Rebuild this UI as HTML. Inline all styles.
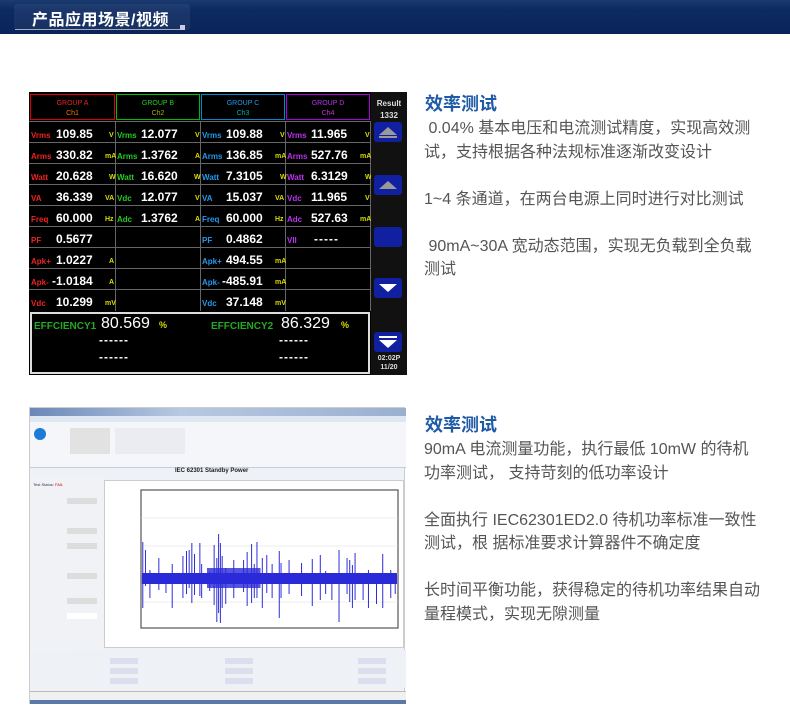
<!DOCTYPE html>
<html><head><meta charset="utf-8"><style>
*{margin:0;padding:0;box-sizing:border-box}
body{width:790px;height:728px;background:#fff;position:relative;overflow:hidden;font-family:"Liberation Sans","Noto Sans CJK SC",sans-serif}
.hdr{position:absolute;left:0;top:0;width:790px;height:34px;background:linear-gradient(180deg,#1a3a70 0%,#0c2a62 30%,#0a2458 100%)}
.hdr .t{position:absolute;left:32px;top:6px;color:#fff;font-size:16px;font-weight:bold;letter-spacing:0.5px}
.hdr .pl{position:absolute;left:14px;top:4px;width:176px;height:26px;background:rgba(255,255,255,0.06);border-radius:3px}
.hdr .ln{position:absolute;left:15px;top:29px;width:167px;height:1px;background:#aab}
.hdr .sq{position:absolute;left:180px;top:25px;width:5px;height:5px;background:#ccd}
.scr{position:absolute;left:29px;top:92px;width:378px;height:283px;background:#000}
.c{position:absolute;font-family:"Liberation Sans",sans-serif;font-weight:bold;white-space:nowrap}
.gh{position:absolute;border:1px solid;font-size:7px;text-align:center;line-height:10px;padding-top:4px}
.lab{position:absolute;font-size:8px;font-weight:bold;white-space:nowrap}
.val{position:absolute;font-size:12px;color:#fff;font-weight:bold;white-space:nowrap}
.u{position:absolute;font-size:7px;color:#dd0;font-weight:bold}
.btn{position:absolute;left:345px;width:28px;height:20px;background:#1020a0;border-radius:3px}
.h{position:absolute;left:425px;color:#1e5aa6;font-size:18px;font-weight:bold}
.p{position:absolute;left:424px;color:#555;font-size:16px;line-height:23.5px;width:366px;white-space:nowrap}
</style></head><body>
<div class="hdr"><div class="pl"></div><div class="t">产品应用场景/视频</div><div class="ln"></div><div class="sq"></div></div>

<div class="scr">
<div class="gh" style="left:1px;top:2px;width:85px;height:26px;border-color:#d00;color:#e22">GROUP A<br><span style="color:#e70">Ch1</span></div>
<div class="gh" style="left:87px;top:2px;width:84px;height:26px;border-color:#0b0;color:#2c2">GROUP B<br><span style="color:#aa0">Ch2</span></div>
<div class="gh" style="left:172px;top:2px;width:84px;height:26px;border-color:#08c;color:#29e">GROUP C<br><span style="color:#0aa">Ch3</span></div>
<div class="gh" style="left:257px;top:2px;width:84px;height:26px;border-color:#a0d;color:#b3e">GROUP D<br><span style="color:#c3c">Ch4</span></div>
<svg style="position:absolute;left:0;top:0" width="342" height="220">
<g stroke="#666" stroke-width="1">
<line x1="0" y1="29.5" x2="342" y2="29.5"/>
<line x1="0" y1="50.5" x2="342" y2="50.5"/><line x1="0" y1="71.5" x2="342" y2="71.5"/><line x1="0" y1="92.5" x2="342" y2="92.5"/><line x1="0" y1="113.5" x2="342" y2="113.5"/><line x1="0" y1="134.5" x2="342" y2="134.5"/><line x1="0" y1="155.5" x2="342" y2="155.5"/><line x1="0" y1="176.5" x2="342" y2="176.5"/><line x1="0" y1="197.5" x2="342" y2="197.5"/>
<line x1="86.5" y1="30" x2="86.5" y2="219"/><line x1="171.5" y1="30" x2="171.5" y2="219"/><line x1="256.5" y1="30" x2="256.5" y2="219"/><line x1="341.5" y1="30" x2="341.5" y2="219"/>
</g></svg>
<div style="position:absolute;left:0;top:0">
<span class="lab" style="left:2px;top:39px;color:#e22">Vrms</span><span class="val" style="left:27px;top:35px">109.85</span><span class="u" style="left:80px;top:40px">V</span>
<span class="lab" style="left:2px;top:60px;color:#e22">Arms</span><span class="val" style="left:27px;top:56px">330.82</span><span class="u" style="left:76px;top:61px">mA</span>
<span class="lab" style="left:2px;top:81px;color:#e22">Watt</span><span class="val" style="left:27px;top:77px">20.628</span><span class="u" style="left:80px;top:82px">W</span>
<span class="lab" style="left:2px;top:102px;color:#e22">VA</span><span class="val" style="left:27px;top:98px">36.339</span><span class="u" style="left:76px;top:103px">VA</span>
<span class="lab" style="left:2px;top:123px;color:#e22">Freq</span><span class="val" style="left:27px;top:119px">60.000</span><span class="u" style="left:76px;top:124px">Hz</span>
<span class="lab" style="left:2px;top:144px;color:#e22">PF</span><span class="val" style="left:27px;top:140px">0.5677</span>
<span class="lab" style="left:2px;top:165px;color:#e22">Apk+</span><span class="val" style="left:27px;top:161px">1.0227</span><span class="u" style="left:80px;top:166px">A</span>
<span class="lab" style="left:2px;top:186px;color:#e22">Apk-</span><span class="val" style="left:23px;top:182px">-1.0184</span><span class="u" style="left:80px;top:187px">A</span>
<span class="lab" style="left:2px;top:207px;color:#e22">Vdc</span><span class="val" style="left:27px;top:203px">10.299</span><span class="u" style="left:76px;top:208px">mV</span>
<span class="lab" style="left:88px;top:39px;color:#2c2">Vrms</span><span class="val" style="left:112px;top:35px">12.077</span><span class="u" style="left:166px;top:40px">V</span>
<span class="lab" style="left:88px;top:60px;color:#2c2">Arms</span><span class="val" style="left:112px;top:56px">1.3762</span><span class="u" style="left:166px;top:61px">A</span>
<span class="lab" style="left:88px;top:81px;color:#2c2">Watt</span><span class="val" style="left:112px;top:77px">16.620</span><span class="u" style="left:165px;top:82px">W</span>
<span class="lab" style="left:88px;top:102px;color:#2c2">Vdc</span><span class="val" style="left:112px;top:98px">12.077</span><span class="u" style="left:166px;top:103px">V</span>
<span class="lab" style="left:88px;top:123px;color:#2c2">Adc</span><span class="val" style="left:112px;top:119px">1.3762</span><span class="u" style="left:166px;top:124px">A</span>
<span class="lab" style="left:173px;top:39px;color:#29e">Vrms</span><span class="val" style="left:197px;top:35px">109.88</span><span class="u" style="left:251px;top:40px">V</span>
<span class="lab" style="left:173px;top:60px;color:#29e">Arms</span><span class="val" style="left:197px;top:56px">136.85</span><span class="u" style="left:246px;top:61px">mA</span>
<span class="lab" style="left:173px;top:81px;color:#29e">Watt</span><span class="val" style="left:197px;top:77px">7.3105</span><span class="u" style="left:251px;top:82px">W</span>
<span class="lab" style="left:173px;top:102px;color:#29e">VA</span><span class="val" style="left:197px;top:98px">15.037</span><span class="u" style="left:246px;top:103px">VA</span>
<span class="lab" style="left:173px;top:123px;color:#29e">Freq</span><span class="val" style="left:197px;top:119px">60.000</span><span class="u" style="left:246px;top:124px">Hz</span>
<span class="lab" style="left:173px;top:144px;color:#29e">PF</span><span class="val" style="left:197px;top:140px">0.4862</span>
<span class="lab" style="left:173px;top:165px;color:#29e">Apk+</span><span class="val" style="left:197px;top:161px">494.55</span><span class="u" style="left:246px;top:166px">mA</span>
<span class="lab" style="left:173px;top:186px;color:#29e">Apk-</span><span class="val" style="left:193px;top:182px">-485.91</span><span class="u" style="left:246px;top:187px">mA</span>
<span class="lab" style="left:173px;top:207px;color:#29e">Vdc</span><span class="val" style="left:197px;top:203px">37.148</span><span class="u" style="left:246px;top:208px">mV</span>
<span class="lab" style="left:258px;top:39px;color:#b3e">Vrms</span><span class="val" style="left:282px;top:35px">11.965</span><span class="u" style="left:336px;top:40px">V</span>
<span class="lab" style="left:258px;top:60px;color:#b3e">Arms</span><span class="val" style="left:282px;top:56px">527.76</span><span class="u" style="left:331px;top:61px">mA</span>
<span class="lab" style="left:258px;top:81px;color:#b3e">Watt</span><span class="val" style="left:282px;top:77px">6.3129</span><span class="u" style="left:336px;top:82px">W</span>
<span class="lab" style="left:258px;top:102px;color:#b3e">Vdc</span><span class="val" style="left:282px;top:98px">11.965</span><span class="u" style="left:336px;top:103px">V</span>
<span class="lab" style="left:258px;top:123px;color:#b3e">Adc</span><span class="val" style="left:282px;top:119px">527.63</span><span class="u" style="left:331px;top:124px">mA</span>
<span class="lab" style="left:258px;top:144px;color:#b3e">VII</span><span class="val" style="left:285px;top:140px;letter-spacing:1px">-----</span>
</div>
<div style="position:absolute;left:1px;top:220px;width:340px;height:62px;border:2px solid #ddd;background:#000">
<span class="c" style="left:2px;top:7px;font-size:10px;color:#2a2">EFFCIENCY1</span>
<span class="c" style="left:69px;top:1px;font-size:16px;color:#fff;font-weight:normal">80.569</span>
<span class="c" style="left:127px;top:6px;font-size:9px;color:#dd0">%</span>
<span class="c" style="left:179px;top:7px;font-size:10px;color:#2a2">EFFCIENCY2</span>
<span class="c" style="left:249px;top:1px;font-size:16px;color:#fff;font-weight:normal">86.329</span>
<span class="c" style="left:309px;top:6px;font-size:9px;color:#dd0">%</span>
<span class="c" style="left:67px;top:19px;font-size:12px;color:#fff;letter-spacing:1px">------</span>
<span class="c" style="left:67px;top:36px;font-size:12px;color:#fff;letter-spacing:1px">------</span>
<span class="c" style="left:247px;top:19px;font-size:12px;color:#fff;letter-spacing:1px">------</span>
<span class="c" style="left:247px;top:36px;font-size:12px;color:#fff;letter-spacing:1px">------</span>
</div>
<div style="position:absolute;left:342px;top:0;width:36px;height:283px;background:#111"></div>
<span class="c" style="left:344px;top:6px;font-size:8px;color:#ddd;width:32px;text-align:center;line-height:12px">Result<br>1332</span>
<div class="btn" style="top:30px"><svg width="28" height="20"><polygon points="5,13 14,5 23,13" fill="#999"/><rect x="5" y="14" width="18" height="2" fill="#999"/></svg></div>
<div class="btn" style="top:83px"><svg width="28" height="20"><polygon points="5,14 14,6 23,14" fill="#999"/></svg></div>
<div class="btn" style="top:135px"></div>
<div class="btn" style="top:186px"><svg width="28" height="20"><polygon points="5,6 14,14 23,6" fill="#fff"/></svg></div>
<div class="btn" style="top:240px"><svg width="28" height="20"><rect x="5" y="4" width="18" height="2" fill="#fff"/><polygon points="5,8 14,16 23,8" fill="#fff"/></svg></div>
<span class="c" style="left:344px;top:262px;font-size:7px;color:#ddd;width:32px;text-align:center;line-height:9px">02:02P<br>11/20</span>
</div>

<div style="position:absolute;left:29px;top:407px;width:376px;height:297px;background:#eef1f6;border:1px solid #ccc">
<div style="position:absolute;left:0;top:0;width:376px;height:8px;background:linear-gradient(90deg,#6a88b8,#b8c8e0 40%,#9ab0d0)"></div>
<div style="position:absolute;left:0;top:8px;width:376px;height:6px;background:#dfe7f2"></div>
<div style="position:absolute;left:0;top:14px;width:376px;height:46px;background:#f4f6fa;border-bottom:1px solid #ccd"></div>
<div style="position:absolute;left:4px;top:20px;width:12px;height:12px;border-radius:50%;background:#1c7ad8"></div>
<div style="position:absolute;left:40px;top:20px;width:40px;height:26px;background:#e2e2e2"></div>
<div style="position:absolute;left:85px;top:20px;width:70px;height:26px;background:#eaecf2"></div>
<div style="position:absolute;left:145px;top:60px;font-size:6px;font-weight:bold;color:#222">IEC 62301 Standby Power</div>
<div style="position:absolute;left:0;top:68px;width:74px;height:175px;background:#f0f2f6"></div>
<div style="position:absolute;left:3px;top:74px;font-size:4px;color:#335">Test Status: <span style="color:#c00">FAIL</span></div>
<div style="position:absolute;left:37px;top:90px;width:30px;height:6px;background:#ddd"></div>
<div style="position:absolute;left:37px;top:120px;width:30px;height:6px;background:#ddd"></div>
<div style="position:absolute;left:37px;top:135px;width:30px;height:6px;background:#ddd"></div>
<div style="position:absolute;left:37px;top:165px;width:30px;height:6px;background:#ddd"></div>
<div style="position:absolute;left:37px;top:190px;width:30px;height:6px;background:#ddd"></div>
<div style="position:absolute;left:37px;top:205px;width:30px;height:6px;background:#fff"></div>
<div style="position:absolute;left:74px;top:72px;width:300px;height:168px;background:#fff;border:1px solid #ccc"></div>
<svg style="position:absolute;left:0;top:0" width="376" height="297">
<rect x="111" y="82" width="257" height="138" fill="#fff" stroke="#555" stroke-width="1.2"/>
<g stroke="#ddd" stroke-width="0.5"><line x1="111" y1="110" x2="368" y2="110"/><line x1="111" y1="138" x2="368" y2="138"/><line x1="111" y1="166" x2="368" y2="166"/><line x1="111" y1="194" x2="368" y2="194"/></g>
<g transform="translate(111,0) scale(0.892,1) translate(-81,0)">
<g stroke="#2a2ad8" stroke-width="1.1">
<path d="M83 134V200M86 142V178M91 162V190M101 150V182M109 165V185M116 156V200M128 148V190M132 143V186M135 142V180M138 135V195M141 146V187M147 135V188M149 156V190M158 164V183M163 137V197M166 150V214M168 126V205M170 135V215M172 148V200M176 160V196M185 152V190M196 152V184M200 144V198M205 136V195M208 156V190M211 134V190M217 150V200M222 147V185M228 156V190M236 143V210M238 155V190M247 152V186M261 155V188M273 151V198M282 147V192M288 163V186M295 168V192M303 142V214M312 150V186M315 152V194M318 157V200M321 145V192M330 170V192M336 162V200M345 166V196M352 146V200M361 162V190M366 170V186"/>
</g>
<rect x="82" y="165" width="286" height="11" fill="#2a2ad8"/>
<rect x="155" y="160" width="60" height="20" fill="#2a2ad8" opacity="0.8"/>
</g>
</svg>
<div style="position:absolute;left:46px;top:242px;width:330px;height:38px;background:#eef1f6"></div>
<div style="position:absolute;left:80px;top:250px;width:28px;height:6px;background:#dde"></div>
<div style="position:absolute;left:80px;top:260px;width:28px;height:6px;background:#dde"></div>
<div style="position:absolute;left:80px;top:270px;width:28px;height:6px;background:#dde"></div>
<div style="position:absolute;left:195px;top:250px;width:28px;height:6px;background:#dde"></div>
<div style="position:absolute;left:195px;top:260px;width:28px;height:6px;background:#dde"></div>
<div style="position:absolute;left:195px;top:270px;width:28px;height:6px;background:#dde"></div>
<div style="position:absolute;left:328px;top:250px;width:28px;height:6px;background:#dde"></div>
<div style="position:absolute;left:328px;top:260px;width:28px;height:6px;background:#dde"></div>
<div style="position:absolute;left:328px;top:270px;width:28px;height:6px;background:#dde"></div>
<div style="position:absolute;left:0;top:283px;width:376px;height:9px;background:#f0f0f0;border-top:1px solid #bbb"></div>
<div style="position:absolute;left:0;top:292px;width:376px;height:4px;background:#5a78a8"></div>
</div>

<div class="h" style="top:90px">效率测试</div>
<div class="p" style="top:117px">&nbsp;0.04% 基本电压和电流测试精度，实现高效测<br>试，支持根据各种法规标准逐渐改变设计<br><br>1~4 条通道，在两台电源上同时进行对比测试<br><br>&nbsp;90mA~30A 宽动态范围，实现无负载到全负载<br>测试</div>

<div class="h" style="top:411px">效率测试</div>
<div class="p" style="top:438px">90mA 电流测量功能，执行最低 10mW 的待机<br>功率测试，&nbsp;支持苛刻的低功率设计<br><br>全面执行 IEC62301ED2.0 待机功率标准一致性<br>测试，根 据标准要求计算器件不确定度<br><br>长时间平衡功能，获得稳定的待机功率结果自动<br>量程模式，实现无隙测量</div>
</body></html>
